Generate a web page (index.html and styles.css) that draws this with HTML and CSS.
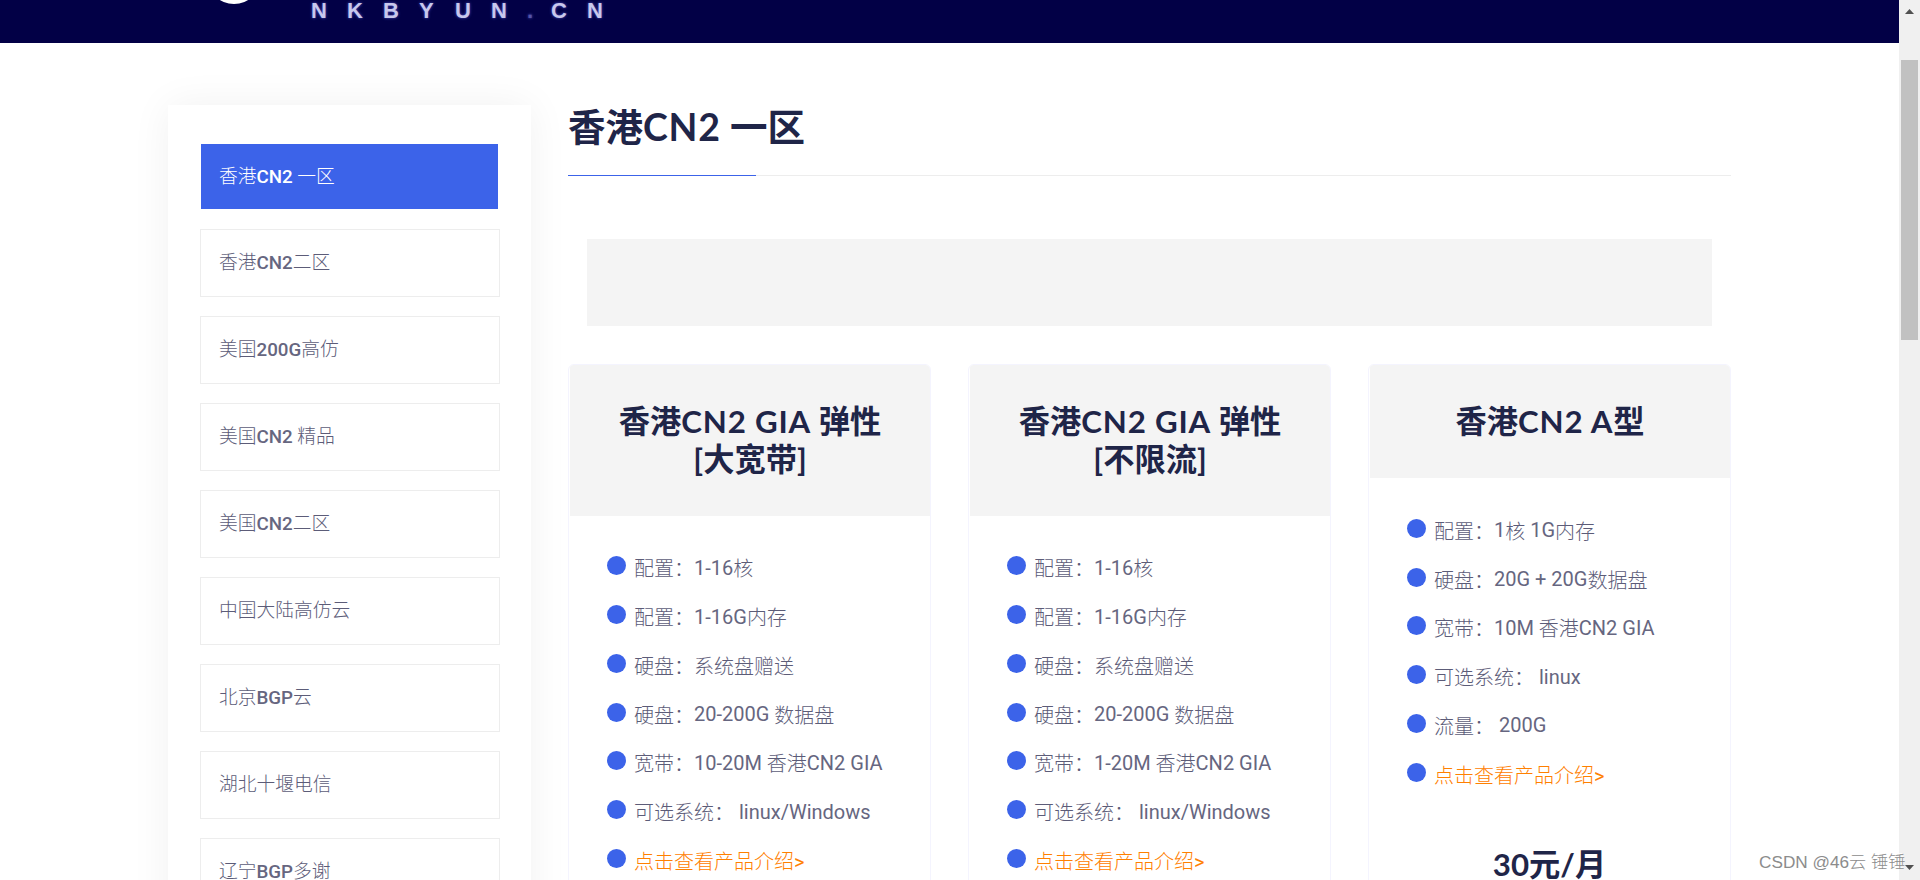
FILE: index.html
```
<!DOCTYPE html>
<html lang="zh-CN">
<head>
    <meta charset="UTF-8">
    <meta name="viewport" content="width=device-width, initial-scale=1.0">
    <title>香港CN2 一区</title>
    <link rel="stylesheet" href="styles.css">
</head>
<body>
    <div class="page">
        <header class="header">
            <div class="logo-mark"></div>
            <div class="logo-text"><span>N</span><span>K</span><span>B</span><span>Y</span><span>U</span><span>N</span><span class="dot">.</span><span>C</span><span>N</span></div>
        </header>
        <div class="container">
            <aside class="sidebar">
                <a class="item active">香港<b>CN2</b> 一区</a>
                <a class="item">香港<b>CN2</b>二区</a>
                <a class="item">美国<b>200G</b>高仿</a>
                <a class="item">美国<b>CN2</b> 精品</a>
                <a class="item">美国<b>CN2</b>二区</a>
                <a class="item">中国大陆高仿云</a>
                <a class="item">北京<b>BGP</b>云</a>
                <a class="item">湖北十堰电信</a>
                <a class="item">辽宁<b>BGP</b>多谢</a>
            </aside>
            <main class="content">
                <h1 class="title">香港<span>CN2</span> 一区</h1>
                <div class="line"></div>
                <div class="notice"></div>
                <div class="cards">
                    <div class="card">
                        <h2 class="card-title">香港<span>CN2 GIA</span> 弹性<br>[大宽带]</h2>
                        <ul class="list">
                            <li>配置：<span>1-16</span>核</li>
                            <li>配置：<span>1-16G</span>内存</li>
                            <li>硬盘：系统盘赠送</li>
                            <li>硬盘：<span>20-200G</span> 数据盘</li>
                            <li>宽带：<span>10-20M</span> 香港<span>CN2 GIA</span></li>
                            <li>可选系统：<span> linux/Windows</span></li>
                            <li><a class="more">点击查看产品介绍<span>&gt;</span></a></li>
                        </ul>
                    </div>
                    <div class="card">
                        <h2 class="card-title">香港<span>CN2 GIA</span> 弹性<br>[不限流]</h2>
                        <ul class="list">
                            <li>配置：<span>1-16</span>核</li>
                            <li>配置：<span>1-16G</span>内存</li>
                            <li>硬盘：系统盘赠送</li>
                            <li>硬盘：<span>20-200G</span> 数据盘</li>
                            <li>宽带：<span>1-20M</span> 香港<span>CN2 GIA</span></li>
                            <li>可选系统：<span> linux/Windows</span></li>
                            <li><a class="more">点击查看产品介绍<span>&gt;</span></a></li>
                        </ul>
                    </div>
                    <div class="card">
                        <h2 class="card-title">香港<span>CN2 A</span>型</h2>
                        <ul class="list">
                            <li>配置：<span>1</span>核<span> 1G</span>内存</li>
                            <li>硬盘：<span>20G + 20G</span>数据盘</li>
                            <li>宽带：<span>10M</span> 香港<span>CN2 GIA</span></li>
                            <li>可选系统：<span> linux</span></li>
                            <li>流量：<span> 200G</span></li>
                            <li><a class="more">点击查看产品介绍<span>&gt;</span></a></li>
                        </ul>
                        <div class="price">30元/月</div>
                    </div>
                </div>
            </main>
        </div>
    </div>
    <div class="scrollbar">
        <svg class="arrow" width="9" height="5" viewBox="0 0 9 5"><path d="M0 5L4.5 0L9 5Z" fill="#505050"/></svg>
        <div class="thumb"></div>
        <svg class="arrow" width="9" height="5" viewBox="0 0 9 5"><path d="M0 0L4.5 5L9 0Z" fill="#505050"/></svg>
    </div>
    <div class="watermark">CSDN @46云 锤锤</div>
</body>
</html>
```
FILE: styles.css
```
* {
    box-sizing: border-box;
}
body {
    margin: 0;
    height: 880px;
    display: flex;
    overflow: hidden;
    background-color: #fff;
    color: #666680;
    font-family: Roboto, "Noto Sans CJK SC", sans-serif;
}
.page {
    width: 1899px;
    height: 880px;
    overflow: hidden;
}
.header {
    display: flex;
    height: 43px;
    padding-left: 207px;
    background-color: #020046;
}
.logo-mark {
    width: 54px;
    height: 54px;
    margin-top: -50px;
    border-radius: 50%;
    background-color: #fff;
}
.logo-text {
    display: flex;
    padding-left: 50px;
    color: #c8c8ec;
    font: bold 22px/22px "Liberation Sans", sans-serif;
}
.logo-text span {
    width: 36px;
    text-shadow: 0 0 3px #5050c0;
}
.logo-text .dot {
    width: 24px;
    color: #5555a8;
}
.container {
    display: flex;
    padding: 62px 0 0 168px;
}
.sidebar {
    width: 363px;
    height: 900px;
    padding: 37px 31px 0 32px;
    background-color: #fff;
    box-shadow: 0 0 38px rgba(0, 0, 0, 0.06);
}
.item {
    display: block;
    height: 68px;
    margin-bottom: 19px;
    padding-left: 18px;
    border: 1px solid #ededed;
    color: #5c5c78;
    font-size: 18.75px;
    font-weight: 300;
    line-height: 66px;
}
.item b {
    color: #666680;
    font-weight: 500;
}
.item.active {
    height: 65px;
    margin: 2px 2px 20px 1px;
    border: 0;
    background-color: #3c63e9;
    color: #fff;
}
.item.active b {
    color: #fff;
}
.content {
    width: 1163px;
    margin-left: 37px;
}
.title {
    height: 70px;
    margin: 0;
    color: #1f2548;
    font: bold 37.5px/43px Lato, "Noto Sans CJK SC", sans-serif;
}
.title span {
    letter-spacing: 0.8px;
}
.line {
    height: 1px;
    background: linear-gradient(to right, #3c63e9 188px, #ededed 188px);
}
.notice {
    height: 87px;
    margin: 63px 19px 38px;
    background-color: #f4f4f4;
}
.cards {
    display: grid;
    grid-template-columns: repeat(3, 363px);
    gap: 37px;
}
.card {
    height: 700px;
    border: 1px solid #f4f4fe;
    border-radius: 6px;
    overflow: hidden;
}
.card-title {
    margin: 0 0 0 1px;
    padding: 38px 0 37.5px;
    background-color: #f4f4f4;
    color: #1f2548;
    font: bold 31.25px/37.5px Lato, "Noto Sans CJK SC", sans-serif;
    text-align: center;
}
.card-title span {
    letter-spacing: 0.8px;
}
.list {
    margin: 0;
    padding: 28px 0 0 38px;
    list-style: none;
    font-size: 20px;
    font-weight: 300;
}
.list li {
    display: flex;
    align-items: center;
    height: 48.75px;
    color: #5c5c78;
    white-space: pre;
}
.list span {
    color: #666680;
    font-weight: 400;
}
.list li::before {
    content: "";
    width: 19px;
    height: 19px;
    margin: -4px 8px 0 0;
    border-radius: 50%;
    background-color: #3c63e9;
}
.list .more,
.list .more span {
    color: #ff8000;
}
.price {
    margin-top: 47px;
    color: #1f2548;
    font: bold 31.25px/37px Lato, "Noto Sans CJK SC", sans-serif;
    text-align: center;
}
.scrollbar {
    display: flex;
    flex-direction: column;
    align-items: center;
    width: 21px;
    height: 880px;
    padding: 9px 0;
    background-color: #f0f0f0;
}
.thumb {
    width: 17px;
    height: 280px;
    margin: 46px 0 525px;
    background-color: #c1c1c1;
}
.watermark {
    position: absolute;
    left: 1759px;
    top: 849px;
    color: #8c8c8c;
    font: 300 17.2px/26px "Liberation Sans", "Noto Sans CJK SC", sans-serif;
    text-shadow: -1px -1px 0 #fff;
    white-space: nowrap;
}
```
